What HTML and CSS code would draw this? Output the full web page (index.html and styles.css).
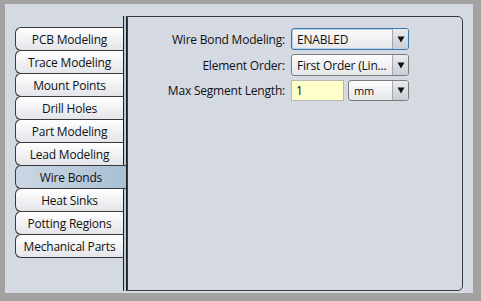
FILE: index.html
```html
<!DOCTYPE html>
<html>
<head>
<meta charset="utf-8">
<link rel="stylesheet" href="styles.css">
</head>
<body>
<div class="window">
  <div class="inner">
    <div class="tabs">
      <div class="tab">PCB Modeling</div>
      <div class="tab">Trace Modeling</div>
      <div class="tab">Mount Points</div>
      <div class="tab">Drill Holes</div>
      <div class="tab">Part Modeling</div>
      <div class="tab">Lead Modeling</div>
      <div class="tab selected">Wire Bonds</div>
      <div class="tab">Heat Sinks</div>
      <div class="tab">Potting Regions</div>
      <div class="tab">Mechanical Parts</div>
    </div>
    <div class="divider"></div>
    <div class="panel">
      <div class="form">
        <div class="lbl">Wire Bond Modeling:</div>
        <div class="select wide focus">
          <span class="val">ENABLED</span>
          <span class="btn"><svg width="8" height="7" viewBox="0 0 8 7"><polygon points="0.5,0.5 7.5,0.5 4,6.5" fill="#111"/></svg></span>
        </div>
        <div class="lbl">Element Order:</div>
        <div class="select wide">
          <span class="val">First Order (Lin...</span>
          <span class="btn"><svg width="8" height="7" viewBox="0 0 8 7"><polygon points="0.5,0.5 7.5,0.5 4,6.5" fill="#111"/></svg></span>
        </div>
        <div class="lbl">Max Segment Length:</div>
        <div class="pair">
          <div class="input">1</div>
          <div class="select unit">
            <span class="val small">mm</span>
            <span class="btn"><svg width="8" height="7" viewBox="0 0 8 7"><polygon points="0.5,0.5 7.5,0.5 4,6.5" fill="#111"/></svg></span>
          </div>
        </div>
      </div>
    </div>
  </div>
</div>
</body>
</html>
```

FILE: styles.css
```css
html, body {
  margin: 0;
  padding: 0;
}
body {
  font-family: "Open Sans", "Noto Sans", sans-serif;
  font-size: 12px;
  color: #111;
}
.window {
  width: 481px;
  height: 301px;
  box-sizing: border-box;
  background: #a2a2a2;
  padding: 4px 8px 8px 5px;
}
.inner {
  height: 289px;
  box-sizing: border-box;
  background: #d5d9e2;
  display: flex;
  padding: 12px 10px 2px 0;
}
.tabs {
  width: 118px;
  box-sizing: border-box;
  padding: 11px 0 0 10px;
  display: flex;
  flex-direction: column;
}
.tab {
  height: 24px;
  box-sizing: border-box;
  margin-top: -1px;
  border: 1px solid #3a3a3a;
  border-right: none;
  border-radius: 6px 0 0 6px;
  background: linear-gradient(#ffffff, #e4e5ea);
  display: flex;
  align-items: center;
  justify-content: center;
  font-size: 12px;
  letter-spacing: -0.2px;
  white-space: nowrap;
  position: relative;
}
.tab:first-child {
  margin-top: 0;
}
.tab.selected {
  background: linear-gradient(90deg, #cbd7e3, #a8bfd5);
  margin-right: -3px;
  z-index: 1;
}
.divider {
  width: 4px;
  box-sizing: border-box;
  border-left: 1px solid #1e1e1e;
  border-right: 1px solid #1e1e1e;
  background: #b7cde2;
}
.panel {
  flex: 1;
  border: 1px solid #3c3c3c;
  border-radius: 0 5px 5px 0;
}
.form {
  display: grid;
  grid-template-columns: 157px auto;
  column-gap: 6px;
  row-gap: 4px;
  padding-top: 11px;
  align-items: center;
}
.lbl {
  text-align: right;
  white-space: nowrap;
  letter-spacing: -0.2px;
}
.select {
  height: 22px;
  box-sizing: border-box;
  border: 1px solid #7c7c7c;
  border-radius: 3px;
  background: linear-gradient(#fdfdfd, #e6e7ea);
  display: flex;
  overflow: hidden;
}
.select.wide {
  width: 118px;
}
.select.focus {
  border-color: #3a77aa;
  box-shadow: inset 0 0 0 1px #b5d1ea;
}
.select.unit {
  width: 61px;
}
.val {
  flex: 1;
  display: flex;
  align-items: center;
  padding-left: 5px;
  white-space: nowrap;
  letter-spacing: -0.2px;
}
.val.small {
  font-size: 11px;
}
.btn {
  width: 15px;
  border-left: 1px solid #a4a8ae;
  background: linear-gradient(#e9ebee, #c9ced6);
  display: flex;
  align-items: center;
  justify-content: center;
}
.pair {
  display: flex;
  gap: 4px;
  height: 21px;
}
.input {
  width: 53px;
  height: 21px;
  box-sizing: border-box;
  border: 1px solid #b9b9b0;
  background: #ffffc9;
  padding-left: 4px;
  display: flex;
  align-items: center;
}
.pair .select {
  height: 21px;
}
```
